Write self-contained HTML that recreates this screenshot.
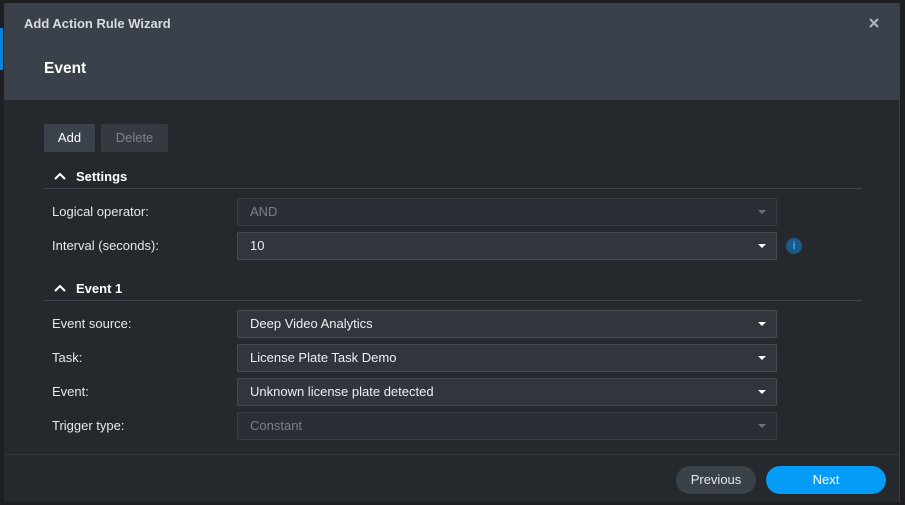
<!DOCTYPE html>
<html><head><style>
*{margin:0;padding:0;box-sizing:border-box}
body{width:905px;height:505px;background:#1d1f23;font-family:"Liberation Sans",sans-serif;position:relative;overflow:hidden;color:#e6e8ea}
.dlg{position:absolute;left:4px;top:3px;width:896px;height:499px;background:#25282d;border-right:1px solid #3a3e44}
.hdr{position:absolute;left:0;top:0;width:100%;height:97px;background:#3b414a}
.t1{position:absolute;left:20px;top:13px;font-size:13px;font-weight:bold;color:#d8dbdf}
.t2{position:absolute;left:40px;top:57px;font-size:15.5px;font-weight:bold;color:#fff}
.x{position:absolute;left:865px;top:15px}
.btn{position:absolute;height:28px;font-size:13px;line-height:28px;text-align:center;border-radius:2px}
.sec{position:absolute;left:40px;width:818px;border-bottom:1px solid #43474d;height:25px;font-size:13px;font-weight:bold;color:#fff}
.sec span{position:absolute;left:32px;top:5px}
.sec svg{position:absolute;left:10px;top:8px}
.lbl{position:absolute;left:48px;font-size:13px;color:#e6e8ea}
.sel{position:absolute;left:233px;width:540px;height:28px;background:#31363d;border:1px solid #464b52;border-radius:2px;font-size:13px;line-height:26px;padding-left:12px;color:#eef0f2}
.sel.d{background:#2b2f35;border-color:#3a3e44;color:#7b8087}
.sel:after{content:"";position:absolute;right:10px;top:11px;border-left:4px solid transparent;border-right:4px solid transparent;border-top:4px solid #fff}
.sel.d:after{border-top-color:#6b7077}
.foot{position:absolute;left:0;top:451px;width:100%;border-top:1px solid #34383e}
</style></head><body>
<div style="position:absolute;left:0;top:28px;width:3px;height:42px;background:#0a84d8"></div>
<div class="dlg">
<div class="hdr"><div class="t1">Add Action Rule Wizard</div><div class="t2">Event</div><svg class="x" width="10" height="10"><path d="M1 1L9 9M9 1L1 9" stroke="#b0b5bb" stroke-width="2"/></svg></div>
<div class="btn" style="left:40px;top:121px;width:51px;background:#3b424b;color:#fff">Add</div>
<div class="btn" style="left:97px;top:121px;width:67px;background:#353a41;color:#7d8289">Delete</div>
<div class="sec" style="top:161px"><svg width="12" height="8"><path d="M1 7L6 2L11 7" stroke="#fff" stroke-width="2" fill="none"/></svg><span>Settings</span></div>
<div class="lbl" style="top:201px">Logical operator:</div>
<div class="sel d" style="top:195px">AND</div>
<div class="lbl" style="top:235px">Interval (seconds):</div>
<div class="sel" style="top:229px">10</div>
<div style="position:absolute;left:782px;top:235px;width:16px;height:16px;border-radius:50%;background:#1b5a86;color:#2aa9ff;font-size:11px;font-weight:bold;text-align:center;line-height:16px">i</div>
<div class="sec" style="top:273px"><svg width="12" height="8"><path d="M1 7L6 2L11 7" stroke="#fff" stroke-width="2" fill="none"/></svg><span>Event 1</span></div>
<div class="lbl" style="top:313px">Event source:</div>
<div class="sel" style="top:307px">Deep Video Analytics</div>
<div class="lbl" style="top:347px">Task:</div>
<div class="sel" style="top:341px">License Plate Task Demo</div>
<div class="lbl" style="top:381px">Event:</div>
<div class="sel" style="top:375px">Unknown license plate detected</div>
<div class="lbl" style="top:415px">Trigger type:</div>
<div class="sel d" style="top:409px">Constant</div>
<div class="foot"></div>
<div class="btn" style="left:672px;top:463px;width:80px;border-radius:14px;background:#3b4148;color:#e6e8ea">Previous</div>
<div class="btn" style="left:762px;top:463px;width:120px;border-radius:14px;background:#049cf6;color:#fff">Next</div>
</div>
</body></html>
